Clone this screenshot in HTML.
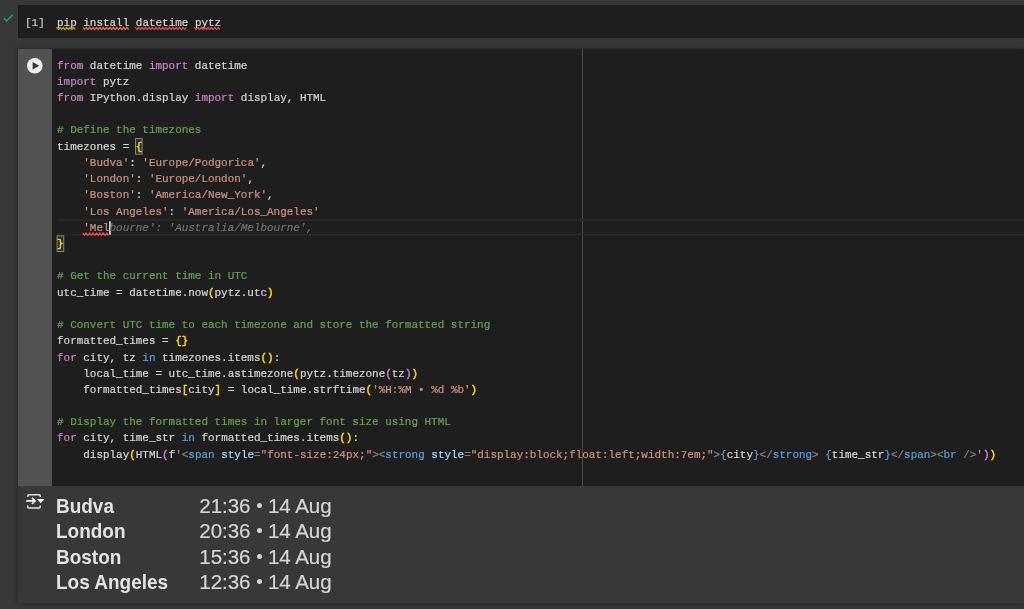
<!DOCTYPE html>
<html><head><meta charset="utf-8"><title>colab</title>
<style>
html,body{margin:0;padding:0;}
.ln,.orow{will-change:transform;}
body{width:1024px;height:609px;overflow:hidden;background:#383838;position:relative;font-family:"Liberation Mono",monospace;}
.abs{position:absolute;}
#cell1{left:18px;top:5px;width:1006px;height:33px;background:#1e1e1e;}
#focus{left:18px;top:48.8px;width:1006px;height:554px;background:#383838;box-shadow:0 0 5px 1px rgba(0,0,0,.3);}
#gutter{left:18px;top:48.8px;width:34px;height:437.5px;background:#525252;}
#editor{left:52px;top:48.8px;width:972px;height:437.5px;background:#1e1e1e;}
#ruler{left:581.9px;top:48.8px;width:1px;height:437.5px;background:#4a4a4a;}
#curline{left:57px;top:219.2px;width:967px;height:13px;border-top:1.6px solid #292929;border-bottom:1.6px solid #292929;}
.ln{position:absolute;left:56.6px;white-space:pre;font-size:10.94px;line-height:16.22px;height:16.22px;letter-spacing:0px;color:#d4d4d4;-webkit-text-stroke:0.22px;}
.k{color:#c586c0} .b{color:#559fdb} .c{color:#62a24b} .s{color:#ce9178} .y{color:#ffd700} .m{color:#da70d6}
.y,.m{-webkit-text-stroke:0.45px}
.t{color:#808080} .a{color:#9cdcfe} .d{color:#d4d4d4} .g{color:#717171;font-style:italic}
.bmb{position:absolute;box-sizing:border-box;border:1px solid #858585;background:#24302a;width:7.4px;height:16.4px;}
.cur{display:none}
#cursor{position:absolute;left:109.1px;top:221.2px;width:1.7px;height:13.6px;background:#dcdcdc;}
.orow{position:absolute;left:56.3px;font-family:"Liberation Sans",sans-serif;font-size:20.5px;line-height:25.35px;color:#d5d5d5;white-space:nowrap;}
.orow b{display:inline-block;width:154.91891891891893px;font-weight:bold;color:#e3e3e3;transform:scaleX(.925);transform-origin:0 0;margin-right:-11.618918918918922px;}
.tm{letter-spacing:-0.03px;-webkit-text-stroke:0.2px;}
.bl{display:inline-block;width:5.2px;height:5.2px;border-radius:50%;background:#d5d5d5;margin:0 5.9px 0 6.4px;vertical-align:4.6px;}
</style></head><body>
<div id="cell1" class="abs"></div>
<div id="focus" class="abs"></div>
<div id="gutter" class="abs"></div>
<div id="editor" class="abs"></div>
<div id="ruler" class="abs"></div>
<svg class="abs" style="left:0;top:0" width="1024" height="609">
<rect x="57" y="219.2" width="967" height="1.6" fill="#2a2a2a"/>
<rect x="57" y="233.8" width="967" height="1.6" fill="#2a2a2a"/>
<rect x="135.5" y="138.6" width="6.6" height="15.6" fill="#24302a" stroke="#858585" stroke-width="1"/>
<rect x="57.1" y="235.9" width="6.6" height="15.6" fill="#24302a" stroke="#858585" stroke-width="1"/>
<rect x="109.1" y="221.3" width="1.7" height="13.4" fill="#dcdcdc"/>
</svg>
<!-- cell 1 -->
<div class="ln" style="left:24.5px;top:14.6px;color:#c4c4c4">[1]</div>
<div class="ln" style="top:14.6px"><span class="sqy">pip</span> <span class="sq">install</span> <span class="sq">datetime</span> <span class="sq">pytz</span></div>
<svg class="abs" style="left:3px;top:11px" width="12" height="12" viewBox="0 0 12 12"><path d="M0.9 7.4 L3.6 9.9 L9.8 3.9" fill="none" stroke="#1fa64e" stroke-width="1.5"/></svg>
<!-- run button -->
<svg class="abs" style="left:26px;top:57px" width="18" height="18" viewBox="0 0 18 18"><circle cx="8.8" cy="8.7" r="7.8" fill="#ececec"/><path d="M6.6 5.0 L13.3 8.7 L6.6 12.4 Z" fill="#3a3a3a"/></svg>
<!-- code -->
<div class="ln" style="top:58.00px"><span class="k">from</span><span class="d"> datetime </span><span class="k">import</span><span class="d"> datetime</span></div>
<div class="ln" style="top:74.00px"><span class="k">import</span><span class="d"> pytz</span></div>
<div class="ln" style="top:90.00px"><span class="k">from</span><span class="d"> IPython.display </span><span class="k">import</span><span class="d"> display, HTML</span></div>
<div class="ln" style="top:106.00px"></div>
<div class="ln" style="top:122.00px"><span class="c"># Define the timezones</span></div>
<div class="ln" style="top:139.00px"><span class="d">timezones = </span><span class="y">{</span></div>
<div class="ln" style="top:155.00px"><span class="d">    </span><span class="s">'Budva'</span><span class="d">: </span><span class="s">'Europe/Podgorica'</span><span class="d">,</span></div>
<div class="ln" style="top:171.00px"><span class="d">    </span><span class="s">'London'</span><span class="d">: </span><span class="s">'Europe/London'</span><span class="d">,</span></div>
<div class="ln" style="top:187.00px"><span class="d">    </span><span class="s">'Boston'</span><span class="d">: </span><span class="s">'America/New_York'</span><span class="d">,</span></div>
<div class="ln" style="top:204.00px"><span class="d">    </span><span class="s">'Los Angeles'</span><span class="d">: </span><span class="s">'America/Los_Angeles'</span></div>
<div class="ln" style="top:220.00px"><span class="d">    </span><span class="s sq">'Mel</span><span class="cur"></span><span class="g">bourne': 'Australia/Melbourne',</span></div>
<div class="ln" style="top:236.00px"><span class="y">}</span></div>
<div class="ln" style="top:252.00px"></div>
<div class="ln" style="top:268.00px"><span class="c"># Get the current time in UTC</span></div>
<div class="ln" style="top:285.00px"><span class="d">utc_time = datetime.now</span><span class="y">(</span><span class="d">pytz.utc</span><span class="y">)</span></div>
<div class="ln" style="top:301.00px"></div>
<div class="ln" style="top:317.00px"><span class="c"># Convert UTC time to each timezone and store the formatted string</span></div>
<div class="ln" style="top:333.00px"><span class="d">formatted_times = </span><span class="y">{}</span></div>
<div class="ln" style="top:350.00px"><span class="k">for</span><span class="d"> city, tz </span><span class="b">in</span><span class="d"> timezones.items</span><span class="y">()</span><span class="d">:</span></div>
<div class="ln" style="top:366.00px"><span class="d">    local_time = utc_time.astimezone</span><span class="y">(</span><span class="d">pytz.timezone</span><span class="m">(</span><span class="d">tz</span><span class="m">)</span><span class="y">)</span></div>
<div class="ln" style="top:382.00px"><span class="d">    formatted_times</span><span class="y">[</span><span class="d">city</span><span class="y">]</span><span class="d"> = local_time.strftime</span><span class="y">(</span><span class="s">'%H:%M • %d %b'</span><span class="y">)</span></div>
<div class="ln" style="top:398.00px"></div>
<div class="ln" style="top:414.00px"><span class="c"># Display the formatted times in larger font size using HTML</span></div>
<div class="ln" style="top:430.00px"><span class="k">for</span><span class="d"> city, time_str </span><span class="b">in</span><span class="d"> formatted_times.items</span><span class="y">()</span><span class="d">:</span></div>
<div class="ln" style="top:447.00px"><span class="d">    display</span><span class="y">(</span><span class="d">HTML</span><span class="m">(</span><span class="d">f</span><span class="s">'</span><span class="t">&lt;</span><span class="b">span</span><span class="d"> </span><span class="a">style</span><span class="t">=</span><span class="s">"font-size:24px;"</span><span class="t">&gt;&lt;</span><span class="b">strong</span><span class="d"> </span><span class="a">style</span><span class="t">=</span><span class="s">"display:block;float:left;width:7em;"</span><span class="t">&gt;</span><span class="b">{</span><span class="d">city</span><span class="b">}</span><span class="t">&lt;/</span><span class="b">strong</span><span class="t">&gt;</span><span class="d"> </span><span class="b">{</span><span class="d">time_str</span><span class="b">}</span><span class="t">&lt;/</span><span class="b">span</span><span class="t">&gt;&lt;</span><span class="b">br</span><span class="d"> </span><span class="t">/&gt;</span><span class="s">'</span><span class="m">)</span><span class="y">)</span></div>

<svg class="abs" style="left:0;top:0" width="1024" height="609"><polyline points="56.60,27.25 58.30,29.55 60.00,27.25 61.70,29.55 63.40,27.25 65.10,29.55 66.80,27.25 68.50,29.55 70.20,27.25 71.90,29.55 73.60,27.25 75.30,29.55" fill="none" stroke="#c2a000" stroke-width="1.2" stroke-linejoin="round"/><polyline points="82.86,27.25 84.56,29.55 86.26,27.25 87.96,29.55 89.66,27.25 91.36,29.55 93.06,27.25 94.76,29.55 96.46,27.25 98.16,29.55 99.86,27.25 101.56,29.55 103.26,27.25 104.96,29.55 106.66,27.25 108.36,29.55 110.06,27.25 111.76,29.55 113.46,27.25 115.16,29.55 116.86,27.25 118.56,29.55 120.26,27.25 121.96,29.55 123.66,27.25 125.36,29.55 127.06,27.25 128.76,29.55" fill="none" stroke="#ee6b3c" stroke-width="1.2" stroke-linejoin="round"/><polyline points="135.38,27.25 137.08,29.55 138.78,27.25 140.48,29.55 142.18,27.25 143.88,29.55 145.58,27.25 147.28,29.55 148.98,27.25 150.68,29.55 152.38,27.25 154.08,29.55 155.78,27.25 157.48,29.55 159.18,27.25 160.88,29.55 162.58,27.25 164.28,29.55 165.98,27.25 167.68,29.55 169.38,27.25 171.08,29.55 172.78,27.25 174.48,29.55 176.18,27.25 177.88,29.55 179.58,27.25 181.28,29.55 182.98,27.25 184.68,29.55 186.38,27.25" fill="none" stroke="#e0484a" stroke-width="1.2" stroke-linejoin="round"/><polyline points="194.47,27.25 196.17,29.55 197.87,27.25 199.57,29.55 201.27,27.25 202.97,29.55 204.67,27.25 206.37,29.55 208.07,27.25 209.77,29.55 211.47,27.25 213.17,29.55 214.87,27.25 216.57,29.55 218.27,27.25 219.97,29.55" fill="none" stroke="#e0484a" stroke-width="1.2" stroke-linejoin="round"/><polyline points="82.86,232.90 84.56,235.50 86.26,232.90 87.96,235.50 89.66,232.90 91.36,235.50 93.06,232.90 94.76,235.50 96.46,232.90 98.16,235.50 99.86,232.90 101.56,235.50 103.26,232.90 104.96,235.50 106.66,232.90 108.36,235.50" fill="none" stroke="#e34a4c" stroke-width="1.25" stroke-linejoin="round"/></svg>
<!-- output icon -->
<svg class="abs" style="left:25px;top:491px" width="24" height="20" viewBox="0 0 24 20"><g fill="none" stroke="#e2e2e2" stroke-width="1.45"><path d="M2.8 6 V4.8 Q2.8 3.8 3.8 3.8 H14.2 Q15.2 3.8 15.2 4.8 V6"/><path d="M2.8 14.4 V15.9 Q2.8 16.9 3.8 16.9 H14.2 Q15.2 16.9 15.2 15.9 V14.4"/></g><path d="M1 9.9 H10 M6.9 6.8 L10.1 9.9 L6.9 13" fill="none" stroke="#f4f4f4" stroke-width="1.7"/><path d="M11.9 8.1 H19.5 L15.7 12.3 Z" fill="#f4f4f4"/></svg>
<!-- output -->
<div class="orow" style="top:492.50px"><b>Budva</b><span class="tm">21:36<span class="bl"></span>14 Aug</span></div>
<div class="orow" style="top:517.85px"><b>London</b><span class="tm">20:36<span class="bl"></span>14 Aug</span></div>
<div class="orow" style="top:544.20px"><b>Boston</b><span class="tm">15:36<span class="bl"></span>14 Aug</span></div>
<div class="orow" style="top:568.55px"><b>Los Angeles</b><span class="tm">12:36<span class="bl"></span>14 Aug</span></div>

</body></html>
